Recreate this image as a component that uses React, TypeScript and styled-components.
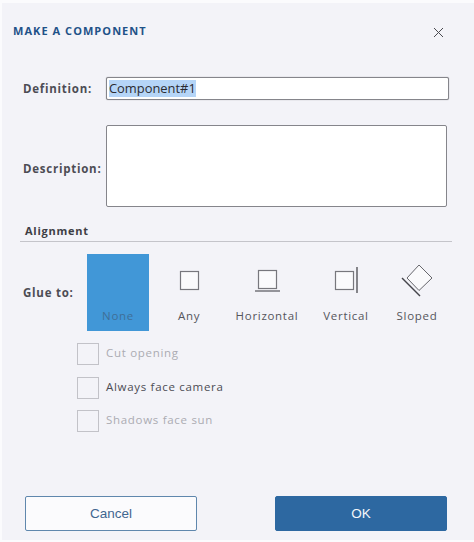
import React from "react";
import styled, { createGlobalStyle } from "styled-components";

const GlobalStyle = createGlobalStyle`
  html, body {
    margin: 0;
    padding: 0;
    background: #fbfbfd;
    overflow: hidden;
  }
  * {
    box-sizing: border-box;
  }
`;

const Dialog = styled.div`
  width: 474px;
  height: 540px;
  padding: 3px 0 0 2px;
  font-family: "Open Sans", "Liberation Sans", sans-serif;
`;

const Panel = styled.div`
  width: 100%;
  height: 100%;
  padding: 0 20px 0 11px;
  background: #f3f3f8;
  display: flex;
  flex-direction: column;
`;

const Header = styled.div`
  height: 55px;
  display: flex;
  align-items: center;
  justify-content: space-between;
  padding-right: 8px;
`;

const Title = styled.h1`
  margin: 0;
  font-size: 11px;
  font-weight: 700;
  letter-spacing: 1.05px;
  color: #1f5288;
`;

const CloseButton = styled.button`
  width: 16px;
  height: 16px;
  margin-top: 3px;
  padding: 0;
  border: 0;
  background: none;
  display: flex;
  align-items: center;
  justify-content: center;
`;

const Row = styled.div<{ $top: number }>`
  margin-top: ${(p) => p.$top}px;
  padding-left: 10px;
  display: flex;
  align-items: center;
`;

const FieldLabel = styled.label<{ $drop?: number }>`
  width: 83px;
  flex: none;
  padding-top: ${(p) => p.$drop || 0}px;
  font-size: 11.5px;
  font-weight: 700;
  letter-spacing: 0.75px;
  color: #4c4c54;
`;

const TextField = styled.div`
  width: 343px;
  height: 23px;
  padding: 0 2px;
  background: #fff;
  border: 1px solid #85858b;
  border-radius: 2px;
  box-shadow: 0 0 1px #85858b;
  display: flex;
  align-items: center;
`;

const Selected = styled.span`
  background: #b5d5f7;
  font-size: 12.9px;
  line-height: 17px;
  color: #2b2b30;
`;

const TextArea = styled.div`
  width: 341px;
  height: 82px;
  background: #fff;
  border: 1px solid #85858b;
  border-radius: 2px;
`;

const SectionTitle = styled.div`
  margin: 17px 0 0 7px;
  width: 432px;
  height: 18px;
  padding-left: 5px;
  border-bottom: 1px solid #c4c4ca;
  font-size: 11px;
  font-weight: 700;
  line-height: 14px;
  letter-spacing: 0.75px;
  color: #3e3e45;
`;

const GlueRow = styled.div`
  margin-top: 12px;
  padding-left: 10px;
  display: flex;
  align-items: center;
`;

const GlueLabel = styled(FieldLabel)`
  width: 64px;
`;

const Option = styled.div<{ $width: number; $active?: boolean }>`
  width: ${(p) => p.$width}px;
  height: 77px;
  flex: none;
  padding-bottom: 7px;
  background: ${(p) => (p.$active ? "#4197d7" : "transparent")};
  display: flex;
  flex-direction: column;
  align-items: center;
  justify-content: flex-end;
`;

const OptionIcon = styled.svg`
  width: 52px;
  height: 40px;
  margin-bottom: 5px;
  flex: none;
`;

const OptionLabel = styled.span<{ $active?: boolean }>`
  font-size: 11.5px;
  line-height: 16px;
  letter-spacing: 0.7px;
  white-space: nowrap;
  color: ${(p) => (p.$active ? "#3f6f97" : "#55555c")};
`;

const Checks = styled.div`
  margin: 12px 0 0 64px;
  display: flex;
  flex-direction: column;
  gap: 11.5px;
`;

const CheckRow = styled.div`
  display: flex;
  align-items: center;
  gap: 7px;
`;

const Box = styled.span`
  width: 22px;
  height: 22px;
  border: 1px solid #c2c2c8;
`;

const CheckText = styled.span<{ $disabled?: boolean }>`
  margin-top: -3px;
  font-size: 11.5px;
  letter-spacing: 0.7px;
  color: ${(p) => (p.$disabled ? "#ababb2" : "#4c4c54")};
`;

const Footer = styled.div`
  margin-top: auto;
  margin-bottom: 9px;
  padding: 0 7px 0 12px;
  display: flex;
  justify-content: space-between;
`;

const Button = styled.button<{ $primary?: boolean }>`
  width: 172px;
  height: 35px;
  padding: 0;
  border-radius: 2px;
  border: 1px solid ${(p) => (p.$primary ? "#2d68a1" : "#5f87ad")};
  background: ${(p) => (p.$primary ? "#2d68a1" : "#fbfbfd")};
  color: ${(p) => (p.$primary ? "#f4f7fb" : "#3f6690")};
  font-family: "Liberation Sans", Arial, sans-serif;
  font-size: 13.5px;
`;

const App = () => {
  return (
    <>
      <GlobalStyle />
      <Dialog>
        <Panel>
          <Header>
            <Title>MAKE A COMPONENT</Title>
            <CloseButton aria-label="Close">
              <svg width="11" height="11" viewBox="0 0 11 11">
                <path d="M1 1 L10 10 M10 1 L1 10" stroke="#4a4a50" strokeWidth="1" fill="none" />
              </svg>
            </CloseButton>
          </Header>
          <Row $top={19}>
            <FieldLabel>Definition:</FieldLabel>
            <TextField>
              <Selected>Component#1</Selected>
            </TextField>
          </Row>
          <Row $top={25}>
            <FieldLabel $drop={4}>Description:</FieldLabel>
            <TextArea />
          </Row>
          <SectionTitle>Alignment</SectionTitle>
          <GlueRow>
            <GlueLabel>Glue to:</GlueLabel>
            <Option $width={62} $active>
              <OptionLabel $active>None</OptionLabel>
            </Option>
            <Option $width={80}>
              <OptionIcon viewBox="0 0 52 40">
                <rect x="17.5" y="8.5" width="18" height="18" fill="#fafafc" stroke="#77777d" strokeWidth="1.2" />
              </OptionIcon>
              <OptionLabel>Any</OptionLabel>
            </Option>
            <Option $width={76}>
              <OptionIcon viewBox="0 0 52 40">
                <rect x="17.5" y="7.5" width="18" height="18" fill="#fafafc" stroke="#77777d" strokeWidth="1.2" />
                <path d="M14 28 H39" stroke="#55555b" strokeWidth="1.2" fill="none" />
              </OptionIcon>
              <OptionLabel>Horizontal</OptionLabel>
            </Option>
            <Option $width={82}>
              <OptionIcon viewBox="0 0 52 40">
                <rect x="15.5" y="8.5" width="18" height="18" fill="#fafafc" stroke="#77777d" strokeWidth="1.2" />
                <path d="M37 4 V30" stroke="#55555b" strokeWidth="1.4" fill="none" />
              </OptionIcon>
              <OptionLabel>Vertical</OptionLabel>
            </Option>
            <Option $width={60}>
              <OptionIcon viewBox="0 0 52 40">
                <path d="M28 2 L41 15 L28 27.5 L16 15 Z" fill="#fafafc" stroke="#66666c" strokeWidth="1" />
                <path d="M11 15 L29 33" stroke="#44444a" strokeWidth="1.4" fill="none" />
              </OptionIcon>
              <OptionLabel>Sloped</OptionLabel>
            </Option>
          </GlueRow>
          <Checks>
            <CheckRow>
              <Box />
              <CheckText $disabled>Cut opening</CheckText>
            </CheckRow>
            <CheckRow>
              <Box />
              <CheckText>Always face camera</CheckText>
            </CheckRow>
            <CheckRow>
              <Box />
              <CheckText $disabled>Shadows face sun</CheckText>
            </CheckRow>
          </Checks>
          <Footer>
            <Button>Cancel</Button>
            <Button $primary>OK</Button>
          </Footer>
        </Panel>
      </Dialog>
    </>
  );
};

export default App;
